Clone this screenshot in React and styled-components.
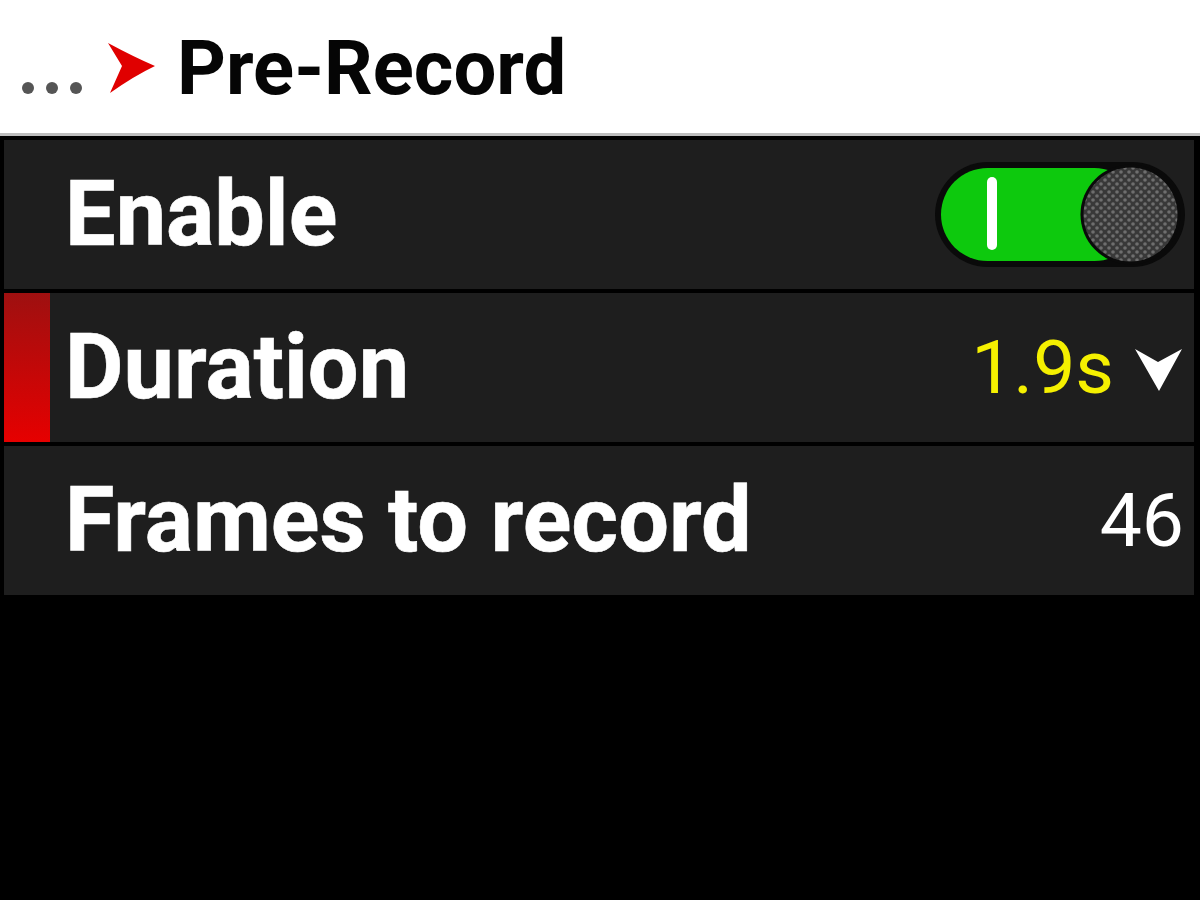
import React from 'react';
import styled, { createGlobalStyle } from 'styled-components';

const GlobalStyle = createGlobalStyle`
  html, body {
    margin: 0;
    padding: 0;
    background: #000;
  }
  body {
    font-family: Roboto, "Liberation Sans", sans-serif;
  }
`;

const Screen = styled.div`
  width: 1200px;
  height: 900px;
  background: #000;
  overflow: hidden;
`;

const Header = styled.header`
  height: 136px;
  background: #fff;
  border-bottom: 3px solid #bdbdbd;
  display: flex;
  align-items: center;
  padding-left: 22px;
  box-sizing: border-box;
`;

const Dots = styled.div`
  display: flex;
  gap: 12px;
  align-self: flex-end;
  margin-bottom: 39px;

  span {
    width: 12px;
    height: 12px;
    border-radius: 50%;
    background: #555;
  }
`;

const Crumb = styled.svg`
  margin-left: 26px;
  margin-top: 2px;
  flex: none;
`;

const Title = styled.h1`
  margin: 0 0 0 21px;
  font-size: 76px;
  font-weight: 700;
  color: #050505;
  line-height: 1;
  padding-top: 2px;
`;

const List = styled.div`
  display: flex;
  flex-direction: column;
  gap: 4px;
  padding: 4px 6px 0 4px;
`;

const Row = styled.div`
  height: 149px;
  background: #1e1e1e;
  display: flex;
  align-items: center;
  padding-right: ${(p) => p.$padRight || 12}px;
`;

const Marker = styled.div`
  width: 46px;
  align-self: stretch;
  flex: none;
  background: ${(p) => (p.$on ? 'linear-gradient(#9e1010, #e60000)' : 'transparent')};
`;

const Label = styled.span`
  margin-left: 15px;
  flex: 1;
  color: #fff;
  font-size: 90px;
  font-weight: 700;
  line-height: 1;
  -webkit-text-stroke: 0.6px #fff;
`;

const Value = styled.span`
  color: ${(p) => p.$color || '#fff'};
  font-size: 75px;
  font-weight: 400;
  line-height: 1;
`;

const DropArrow = styled.svg`
  margin-left: 21px;
  margin-top: 4px;
  flex: none;
`;

function Toggle() {
  return (
    <svg width="250" height="105" viewBox="0 0 250 105">
      <defs>
        <pattern id="knobDots" width="8" height="8" patternUnits="userSpaceOnUse">
          <rect width="8" height="8" fill="#383838" />
          <circle cx="2" cy="2" r="1.8" fill="#6e6e6e" />
          <circle cx="6" cy="6" r="1.8" fill="#6e6e6e" />
        </pattern>
      </defs>
      <rect x="0" y="0" width="250" height="105" rx="52.5" fill="#0a0a0a" />
      <rect x="6" y="6" width="200" height="93" rx="46.5" fill="#0dc90d" />
      <rect x="52" y="15" width="10" height="73" rx="5" fill="#fff" />
      <circle cx="195.5" cy="52.5" r="50" fill="#0a0a0a" />
      <circle cx="195.5" cy="52.5" r="47" fill="url(#knobDots)" />
    </svg>
  );
}

export default function App() {
  return (
    <Screen>
      <GlobalStyle />
      <Header>
        <Dots>
          <span />
          <span />
          <span />
        </Dots>
        <Crumb width="48" height="52" viewBox="0 0 48 52">
          <path d="M0 1 Q 26 15 47 24 Q 26 34 2 51 L14 24 Z" fill="#e00000" />
        </Crumb>
        <Title>Pre-Record</Title>
      </Header>
      <List>
        <Row $padRight={9}>
          <Marker />
          <Label>Enable</Label>
          <Toggle />
        </Row>
        <Row $padRight={11}>
          <Marker $on />
          <Label>Duration</Label>
          <Value $color="#f5f000">1.9s</Value>
          <DropArrow width="48" height="44" viewBox="0 0 48 44">
            <path d="M0 1 L23 14 L47 1 L24 43 Z" fill="#fff" />
          </DropArrow>
        </Row>
        <Row $padRight={10}>
          <Marker />
          <Label>Frames to record</Label>
          <Value>46</Value>
        </Row>
      </List>
    </Screen>
  );
}
